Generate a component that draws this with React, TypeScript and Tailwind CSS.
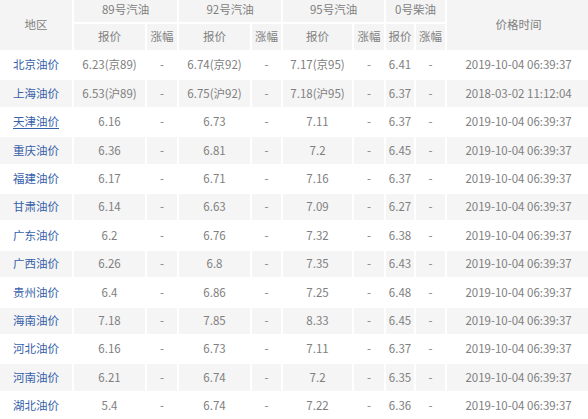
import React from 'react';

const rows = [
  { city: '北京油价', p89: '6.23(京89)', p92: '6.74(京92)', p95: '7.17(京95)', p0: '6.41', time: '2019-10-04 06:39:37' },
  { city: '上海油价', p89: '6.53(沪89)', p92: '6.75(沪92)', p95: '7.18(沪95)', p0: '6.37', time: '2018-03-02 11:12:04' },
  { city: '天津油价', p89: '6.16', p92: '6.73', p95: '7.11', p0: '6.37', time: '2019-10-04 06:39:37', hover: true },
  { city: '重庆油价', p89: '6.36', p92: '6.81', p95: '7.2', p0: '6.45', time: '2019-10-04 06:39:37' },
  { city: '福建油价', p89: '6.17', p92: '6.71', p95: '7.16', p0: '6.37', time: '2019-10-04 06:39:37' },
  { city: '甘肃油价', p89: '6.14', p92: '6.63', p95: '7.09', p0: '6.27', time: '2019-10-04 06:39:37' },
  { city: '广东油价', p89: '6.2', p92: '6.76', p95: '7.32', p0: '6.38', time: '2019-10-04 06:39:37' },
  { city: '广西油价', p89: '6.26', p92: '6.8', p95: '7.35', p0: '6.43', time: '2019-10-04 06:39:37' },
  { city: '贵州油价', p89: '6.4', p92: '6.86', p95: '7.25', p0: '6.48', time: '2019-10-04 06:39:37' },
  { city: '海南油价', p89: '7.18', p92: '7.85', p95: '8.33', p0: '6.45', time: '2019-10-04 06:39:37' },
  { city: '河北油价', p89: '6.16', p92: '6.73', p95: '7.11', p0: '6.37', time: '2019-10-04 06:39:37' },
  { city: '河南油价', p89: '6.21', p92: '6.74', p95: '7.2', p0: '6.35', time: '2019-10-04 06:39:37' },
  { city: '湖北油价', p89: '5.4', p92: '6.74', p95: '7.22', p0: '6.36', time: '2019-10-04 06:39:37' },
];

const colWidths = [72, 73, 32, 73, 31, 71, 32, 30, 31, 143];

const th = 'border-2 border-white bg-[#f4f4f4] font-normal text-[#808080] p-0';
const td = 'border-2 border-white p-0 text-center';

export default function App() {
  return (
    <div className="w-[588px] h-[419px] overflow-hidden bg-white text-[11.5px] leading-none" style={{ fontFamily: '"Noto Sans CJK SC", "Noto Sans", sans-serif' }}>
      <table className="border-collapse table-fixed -mt-[2px] -ml-[2px]" style={{ width: 592 }}>
        <colgroup>
          {colWidths.map((w, i) => (
            <col key={i} style={{ width: w + (i === 0 || i === colWidths.length - 1 ? 2 : 0) }} />
          ))}
        </colgroup>
        <thead>
          <tr className="h-[24px]">
            <th rowSpan={2} className={th}>地区</th>
            <th colSpan={2} className={`${th} pb-[3px]`}>89号汽油</th>
            <th colSpan={2} className={`${th} pb-[3px]`}>92号汽油</th>
            <th colSpan={2} className={`${th} pb-[3px]`}>95号汽油</th>
            <th colSpan={2} className={`${th} pb-[3px]`}>0号柴油</th>
            <th rowSpan={2} className={th}>价格时间</th>
          </tr>
          <tr className="h-[28px]">
            <th className={th}>报价</th>
            <th className={th}>涨幅</th>
            <th className={th}>报价</th>
            <th className={th}>涨幅</th>
            <th className={th}>报价</th>
            <th className={th}>涨幅</th>
            <th className={th}>报价</th>
            <th className={th}>涨幅</th>
          </tr>
        </thead>
        <tbody>
          {rows.map((r, i) => (
            <tr key={r.city} className={`h-[28.4px] text-[#808080] ${i % 2 === 1 ? 'bg-[#f5f5f5]' : 'bg-white'}`}>
              <td className={td}>
                <a className={`text-[#3561aa] ${r.hover ? 'underline underline-offset-2' : ''}`}>{r.city}</a>
              </td>
              <td className={td}>{r.p89}</td>
              <td className={td}>-</td>
              <td className={td}>{r.p92}</td>
              <td className={td}>-</td>
              <td className={td}>{r.p95}</td>
              <td className={td}>-</td>
              <td className={td}>{r.p0}</td>
              <td className={td}>-</td>
              <td className={td}>{r.time}</td>
            </tr>
          ))}
        </tbody>
      </table>
    </div>
  );
}
